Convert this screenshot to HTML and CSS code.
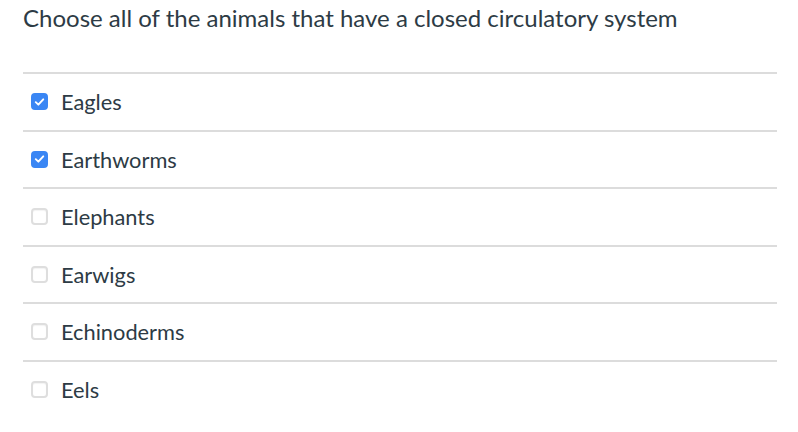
FILE: index.html
```html
<!DOCTYPE html>
<html lang="en">
<head>
  <meta charset="UTF-8">
  <title>Quiz question</title>
  <link rel="stylesheet" href="styles.css">
</head>
<body>

  <!-- Pregunta -->
  <div class="pregunta">
    <p class="enunciado">Choose all of the animals that have a closed circulatory system</p>

    <div class="respuestas">
      <label class="opcion">
        <span class="caja marcada">
          <svg viewBox="0 0 16 16" width="14" height="14"><path d="M3.4 8.2 L6.6 11.2 L12.6 4.8" fill="none" stroke="#fff" stroke-width="2.4" stroke-linecap="round" stroke-linejoin="round"/></svg>
        </span>
        <span class="texto">Eagles</span>
      </label>
      <label class="opcion">
        <span class="caja marcada">
          <svg viewBox="0 0 16 16" width="14" height="14"><path d="M3.4 8.2 L6.6 11.2 L12.6 4.8" fill="none" stroke="#fff" stroke-width="2.4" stroke-linecap="round" stroke-linejoin="round"/></svg>
        </span>
        <span class="texto">Earthworms</span>
      </label>
      <label class="opcion">
        <span class="caja"></span>
        <span class="texto">Elephants</span>
      </label>
      <label class="opcion">
        <span class="caja"></span>
        <span class="texto">Earwigs</span>
      </label>
      <label class="opcion">
        <span class="caja"></span>
        <span class="texto">Echinoderms</span>
      </label>
      <label class="opcion">
        <span class="caja"></span>
        <span class="texto">Eels</span>
      </label>
    </div>
  </div>

</body>
</html>
```

FILE: styles.css
```css
body {
  margin: 0;
  padding: 0;
  font-family: Lato, 'Liberation Sans', sans-serif;
  color: #2d3b45;
  background: #fff;
}

.pregunta {
  padding: 3px 21px 0 23px;
}

.enunciado {
  margin: 0;
  font-size: 24px;
  line-height: 30px;
  height: 69px;
}

.respuestas {
  display: flex;
  flex-direction: column;
}

.opcion {
  display: flex;
  align-items: center;
  gap: 13px;
  height: 57.5px;
  box-sizing: border-box;
  border-top: 2px solid #dcdcdc;
  padding-left: 8px;
}

.caja {
  width: 17px;
  height: 17px;
  box-sizing: border-box;
  border: 2px solid #dedede;
  border-radius: 4px;
  background: #fff;
  box-shadow: inset 0 1px 1px rgba(0, 0, 0, 0.05);
  display: flex;
  align-items: center;
  justify-content: center;
}

.caja.marcada {
  background: #3a86f4;
  border-color: #3a86f4;
  box-shadow: none;
}

.texto {
  font-size: 21.8px;
}
```
